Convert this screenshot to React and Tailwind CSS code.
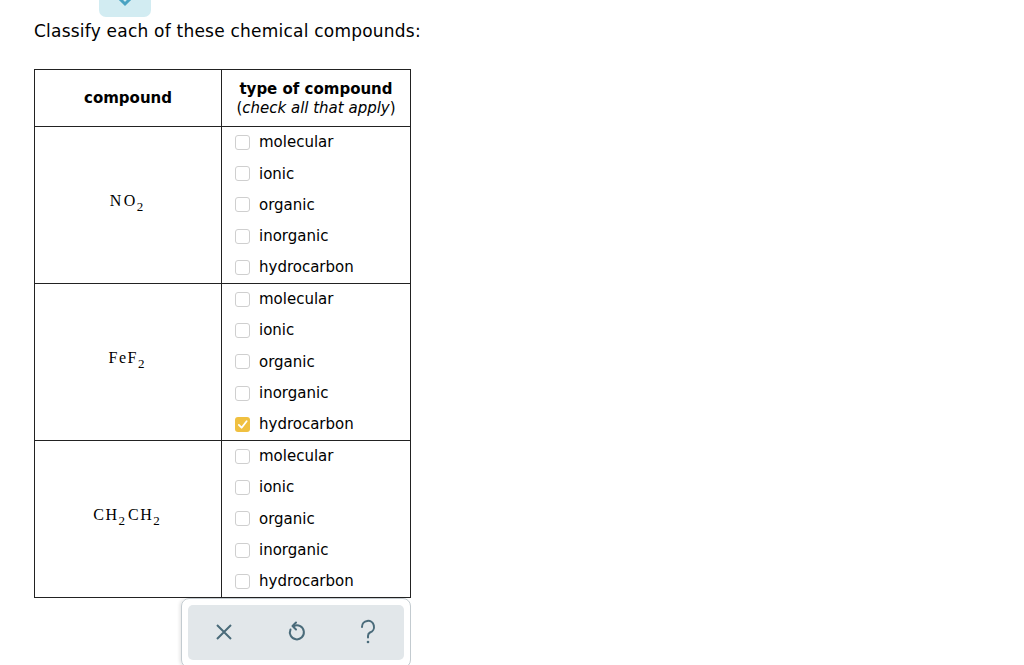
import React from "react";

const options = ["molecular", "ionic", "organic", "inorganic", "hydrocarbon"];

const rows = [
  { id: "no2", formula: [["N", false], ["O", false], ["2", true]], checked: [] },
  { id: "fef2", formula: [["FeF", false], ["2", true]], checked: ["hydrocarbon"] },
  {
    id: "ch2ch2",
    formula: [["CH", false], ["2", true], ["CH", false], ["2", true]],
    checked: [],
  },
];

const Formula = ({ parts }) => (
  <span className="font-['Liberation_Serif',serif] text-[16px] text-black">
    {parts.map(([t, sub], i) =>
      sub ? (
        <sub key={i} className="text-[13px] relative top-[5px] align-baseline ml-[-1px] mr-[3px]">
          {t}
        </sub>
      ) : (
        <span key={i} className="tracking-[1.5px] mr-[1px]">{t}</span>
      )
    )}
  </span>
);

const Checkbox = ({ checked }) =>
  checked ? (
    <span className="w-[15px] h-[15px] rounded-[3px] bg-[#f0c040] flex items-center justify-center shrink-0">
      <svg width="11" height="11" viewBox="0 0 12 12" fill="none">
        <path d="M2 6.5 L5 9.5 L10.5 2.5" stroke="white" strokeWidth="2" strokeLinecap="round" strokeLinejoin="round" />
      </svg>
    </span>
  ) : (
    <span className="w-[15px] h-[15px] rounded-[3px] border border-[#cfcfcf] bg-white shrink-0" />
  );

export default function App() {
  return (
    <div className="min-h-[665px] bg-white font-['DejaVu_Sans',Verdana,sans-serif] text-black relative">
      <div className="absolute left-[99px] top-0 w-[52px] h-[17px] bg-[#d2ecf2] rounded-b-[7px] flex justify-center">
        <svg width="18" height="7" viewBox="0 0 18 7">
          <path d="M3 -2 L9 4 L15 -2" stroke="#4aa3c2" strokeWidth="3" fill="none" />
        </svg>
      </div>
      <div className="pt-[20px] pl-[34px]">
        <p className="text-[17px] leading-[22px] tracking-[0.22px]">Classify each of these chemical compounds:</p>
        <div className="mt-[27px] w-[377px]">
          <table className="w-[377px] border-collapse border border-[#222]">
            <thead>
              <tr className="h-[57px]">
                <th className="w-[187px] border border-[#222] text-[15px] font-bold text-center pt-[1px]">compound</th>
                <th className="border border-[#222] text-[15px] leading-[19px] text-center pt-[2px]">
                  <div className="font-bold">type of compound</div>
                  <div className="font-normal">
                    (<i>check all that apply</i>)
                  </div>
                </th>
              </tr>
            </thead>
            <tbody>
              {rows.map((r) => (
                <tr key={r.id}>
                  <td className="border border-[#222] text-center align-middle pb-[8px]">
                    <Formula parts={r.formula} />
                  </td>
                  <td className="border border-[#222] pl-[13px] py-0">
                    {options.map((o) => (
                      <div key={o} className="h-[31.2px] flex items-center gap-[9px] text-[15px]">
                        <Checkbox checked={r.checked.includes(o)} />
                        <span>{o}</span>
                      </div>
                    ))}
                  </td>
                </tr>
              ))}
            </tbody>
          </table>
          <div className="flex justify-end">
            <div className="w-[230px] h-[70px] border border-[#c3cbd0] rounded-[8px] p-[6px] shadow-[-2px_0_3px_rgba(0,0,0,0.08)]">
              <div className="h-[55px] bg-[#e2e7ea] rounded-[5px] grid grid-cols-3 items-center justify-items-center text-[#4a6b7a]">
                <svg width="20" height="20" viewBox="0 0 20 20">
                  <path d="M3 3 L17 17 M17 3 L3 17" stroke="#4a6b7a" strokeWidth="2" />
                </svg>
                <svg width="20" height="22" viewBox="0 0 20 22">
                  <path d="M8 5 A7 7 0 1 1 4.5 8.5" stroke="#4a6b7a" strokeWidth="2" fill="none" strokeLinecap="round" />
                  <path d="M10 1.5 L6.5 5 L10 8.5" stroke="#4a6b7a" strokeWidth="2" fill="none" strokeLinecap="round" strokeLinejoin="round" />
                </svg>
                <svg width="20" height="26" viewBox="0 0 20 26">
                  <path d="M4 8 A6 6 0 1 1 12 13.5 C10.5 14.3 10 15.3 10 17 L10 18.5" stroke="#4a6b7a" strokeWidth="2" fill="none" strokeLinecap="round" />
                  <circle cx="10" cy="23" r="1.3" fill="#4a6b7a" />
                </svg>
              </div>
            </div>
          </div>
        </div>
      </div>
    </div>
  );
}
